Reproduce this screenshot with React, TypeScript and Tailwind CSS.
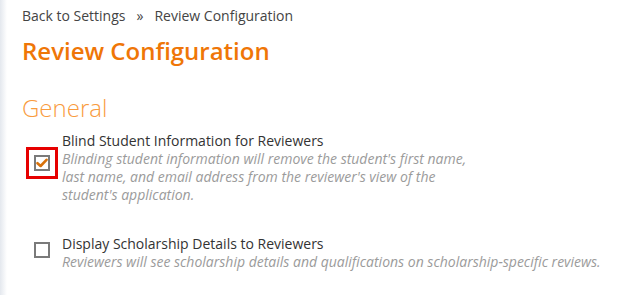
import React from "react";

const font = { fontFamily: '"Open Sans", "Liberation Sans", sans-serif' };

function Check({ checked, highlight }: { checked: boolean; highlight?: boolean }) {
  const box = (
    <div className="w-4 h-4 border-2 border-[#7a7a7a] bg-white flex items-center justify-center">
      {checked && (
        <svg width="12" height="10" viewBox="0 0 12 10">
          <path d="M1.5 5.2 L4.6 8 L10.5 1.8" fill="none" stroke="#d9720b" strokeWidth="2.6" strokeLinecap="round" strokeLinejoin="round" />
        </svg>
      )}
    </div>
  );
  if (highlight) {
    return <div className="border-[3px] border-[#e60000] p-[5px] bg-white">{box}</div>;
  }
  return <div className="p-[8px]">{box}</div>;
}

function Option({
  title,
  desc,
  checked,
  highlight,
  offset,
  descWidth,
}: {
  title: string;
  desc: string;
  checked: boolean;
  highlight?: boolean;
  offset: string;
  descWidth: string;
}) {
  return (
    <div className="flex items-start">
      <div className={`w-[36px] shrink-0 flex justify-start ${offset}`}>
        <Check checked={checked} highlight={highlight} />
      </div>
      <div className="text-[14px] leading-[18px]">
        <div className="text-[#333]">{title}</div>
        <div className={`italic text-[#9b9b9b] ${descWidth}`}>{desc}</div>
      </div>
    </div>
  );
}

export default function App() {
  return (
    <div className="flex w-[640px] h-[295px] bg-white overflow-hidden" style={font}>
      <div className="w-[7px] bg-gradient-to-r from-[#e4e8ee] to-white shrink-0" />
      <div className="pl-[15px] pt-[6px] flex-1">
        <div className="flex items-center text-[14px] leading-[20px] text-[#444]">
          <span>Back to Settings</span>
          <span className="mx-[11px]">»</span>
          <span>Review Configuration</span>
        </div>
        <h1 className="mt-[10px] text-[24px] leading-[29px] font-semibold text-[#ef7607]">
          Review Configuration
        </h1>
        <h2 className="mt-[28px] text-[24px] leading-[29px] font-light text-[#f99b3e]">General</h2>
        <div className="mt-[10px] pl-[4px]">
          <Option
            title="Blind Student Information for Reviewers"
            desc="Blinding student information will remove the student's first name, last name, and email address from the reviewer's view of the student's application."
            checked
            highlight
            offset="mt-[15px]"
            descWidth="max-w-[415px]"
          />
          <div className="mt-[31px]">
            <Option
              title="Display Scholarship Details to Reviewers"
              desc="Reviewers will see scholarship details and qualifications on scholarship-specific reviews."
              checked={false}
              offset="mt-[-1px]"
              descWidth="whitespace-nowrap"
            />
          </div>
        </div>
      </div>
    </div>
  );
}
